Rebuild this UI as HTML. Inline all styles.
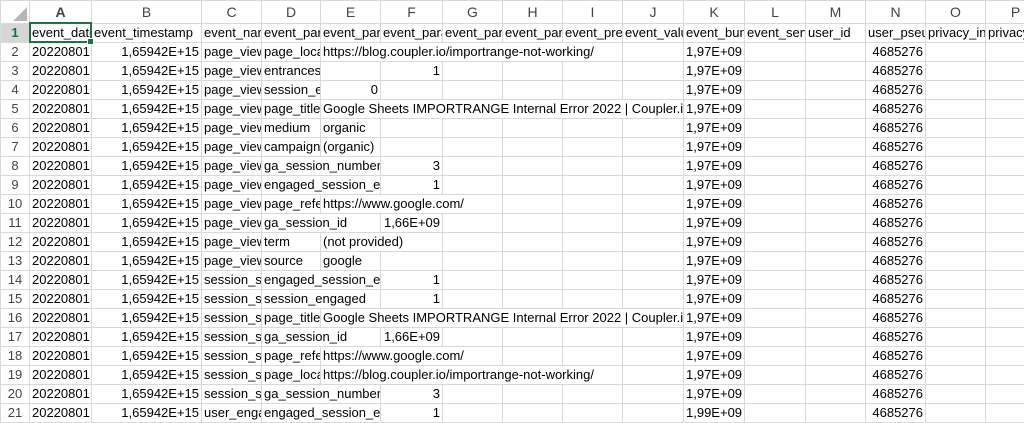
<!DOCTYPE html><html><head><style>
body{margin:0;width:1024px;height:422px;overflow:hidden;background:#fff;font-family:"Liberation Sans",sans-serif;font-size:13px;color:#000}
table{border-collapse:collapse;table-layout:fixed;position:absolute;left:0;top:0;width:1045px}
td{border:1px solid #d9d9d9;height:18px;padding:0 2px;white-space:nowrap;overflow:hidden;text-overflow:clip;line-height:18px;max-width:0}
tr.h td{height:21px;text-align:center;color:#444;font-size:14px;background:#fff;border-color:#d9d9d9}
td.r{text-align:right}
td.n{text-align:center;color:#444;background:#fff;padding:0}
td.sel{background:#d6d6d6;color:#1e6b3c;font-weight:bold}
tr.h td.sel{border-bottom:2px solid #217346}
.corner{position:relative}
.corner:after{content:"";position:absolute;right:2px;bottom:2px;border-left:14px solid transparent;border-bottom:14px solid #b7b7b7}
#act{position:absolute;left:29px;top:22px;width:59px;height:17px;border:2px solid #217346}
#act:after{content:"";position:absolute;right:-4px;bottom:-4px;width:5px;height:5px;background:#217346;border:1px solid #fff}
</style></head><body>
<table>
<colgroup><col style="width:29px"><col style="width:62px"><col style="width:110px"><col style="width:60px"><col style="width:59px"><col style="width:60px"><col style="width:62px"><col style="width:60px"><col style="width:60px"><col style="width:60px"><col style="width:61px"><col style="width:61px"><col style="width:61px"><col style="width:60px"><col style="width:60px"><col style="width:60px"><col style="width:60px"></colgroup>
<tr class="h"><td class="corner"></td><td class="sel">A</td><td>B</td><td>C</td><td>D</td><td>E</td><td>F</td><td>G</td><td>H</td><td>I</td><td>J</td><td>K</td><td>L</td><td>M</td><td>N</td><td>O</td><td>P</td></tr>
<tr><td class="n sel">1</td><td>event_date</td><td>event_timestamp</td><td>event_name</td><td>event_para</td><td>event_para</td><td>event_para</td><td>event_para</td><td>event_para</td><td>event_previous</td><td>event_value</td><td>event_bundle</td><td>event_server</td><td>user_id</td><td class="r">user_pseu</td><td>privacy_in</td><td>privacy_info</td></tr>
<tr><td class="n">2</td><td>20220801</td><td class="r">1,65942E+15</td><td>page_view</td><td>page_location</td><td colspan="5">https://blog.coupler.io/importrange-not-working/</td><td></td><td class="r">1,97E+09</td><td></td><td></td><td class="r">4685276</td><td></td><td></td></tr>
<tr><td class="n">3</td><td>20220801</td><td class="r">1,65942E+15</td><td>page_view</td><td>entrances</td><td></td><td class="r">1</td><td></td><td></td><td></td><td></td><td class="r">1,97E+09</td><td></td><td></td><td class="r">4685276</td><td></td><td></td></tr>
<tr><td class="n">4</td><td>20220801</td><td class="r">1,65942E+15</td><td>page_view</td><td>session_engaged</td><td class="r">0</td><td></td><td></td><td></td><td></td><td></td><td class="r">1,97E+09</td><td></td><td></td><td class="r">4685276</td><td></td><td></td></tr>
<tr><td class="n">5</td><td>20220801</td><td class="r">1,65942E+15</td><td>page_view</td><td>page_title</td><td colspan="6">Google Sheets IMPORTRANGE Internal Error 2022 | Coupler.io Blog</td><td class="r">1,97E+09</td><td></td><td></td><td class="r">4685276</td><td></td><td></td></tr>
<tr><td class="n">6</td><td>20220801</td><td class="r">1,65942E+15</td><td>page_view</td><td>medium</td><td>organic</td><td></td><td></td><td></td><td></td><td></td><td class="r">1,97E+09</td><td></td><td></td><td class="r">4685276</td><td></td><td></td></tr>
<tr><td class="n">7</td><td>20220801</td><td class="r">1,65942E+15</td><td>page_view</td><td>campaign</td><td>(organic)</td><td></td><td></td><td></td><td></td><td></td><td class="r">1,97E+09</td><td></td><td></td><td class="r">4685276</td><td></td><td></td></tr>
<tr><td class="n">8</td><td>20220801</td><td class="r">1,65942E+15</td><td>page_view</td><td colspan="2">ga_session_number</td><td class="r">3</td><td></td><td></td><td></td><td></td><td class="r">1,97E+09</td><td></td><td></td><td class="r">4685276</td><td></td><td></td></tr>
<tr><td class="n">9</td><td>20220801</td><td class="r">1,65942E+15</td><td>page_view</td><td colspan="2">engaged_session_event</td><td class="r">1</td><td></td><td></td><td></td><td></td><td class="r">1,97E+09</td><td></td><td></td><td class="r">4685276</td><td></td><td></td></tr>
<tr><td class="n">10</td><td>20220801</td><td class="r">1,65942E+15</td><td>page_view</td><td>page_referrer</td><td colspan="3">https://www.google.com/</td><td></td><td></td><td></td><td class="r">1,97E+09</td><td></td><td></td><td class="r">4685276</td><td></td><td></td></tr>
<tr><td class="n">11</td><td>20220801</td><td class="r">1,65942E+15</td><td>page_view</td><td colspan="2">ga_session_id</td><td class="r">1,66E+09</td><td></td><td></td><td></td><td></td><td class="r">1,97E+09</td><td></td><td></td><td class="r">4685276</td><td></td><td></td></tr>
<tr><td class="n">12</td><td>20220801</td><td class="r">1,65942E+15</td><td>page_view</td><td>term</td><td colspan="2">(not provided)</td><td></td><td></td><td></td><td></td><td class="r">1,97E+09</td><td></td><td></td><td class="r">4685276</td><td></td><td></td></tr>
<tr><td class="n">13</td><td>20220801</td><td class="r">1,65942E+15</td><td>page_view</td><td>source</td><td>google</td><td></td><td></td><td></td><td></td><td></td><td class="r">1,97E+09</td><td></td><td></td><td class="r">4685276</td><td></td><td></td></tr>
<tr><td class="n">14</td><td>20220801</td><td class="r">1,65942E+15</td><td>session_start</td><td colspan="2">engaged_session_event</td><td class="r">1</td><td></td><td></td><td></td><td></td><td class="r">1,97E+09</td><td></td><td></td><td class="r">4685276</td><td></td><td></td></tr>
<tr><td class="n">15</td><td>20220801</td><td class="r">1,65942E+15</td><td>session_start</td><td colspan="2">session_engaged</td><td class="r">1</td><td></td><td></td><td></td><td></td><td class="r">1,97E+09</td><td></td><td></td><td class="r">4685276</td><td></td><td></td></tr>
<tr><td class="n">16</td><td>20220801</td><td class="r">1,65942E+15</td><td>session_start</td><td>page_title</td><td colspan="6">Google Sheets IMPORTRANGE Internal Error 2022 | Coupler.io Blog</td><td class="r">1,97E+09</td><td></td><td></td><td class="r">4685276</td><td></td><td></td></tr>
<tr><td class="n">17</td><td>20220801</td><td class="r">1,65942E+15</td><td>session_start</td><td colspan="2">ga_session_id</td><td class="r">1,66E+09</td><td></td><td></td><td></td><td></td><td class="r">1,97E+09</td><td></td><td></td><td class="r">4685276</td><td></td><td></td></tr>
<tr><td class="n">18</td><td>20220801</td><td class="r">1,65942E+15</td><td>session_start</td><td>page_referrer</td><td colspan="3">https://www.google.com/</td><td></td><td></td><td></td><td class="r">1,97E+09</td><td></td><td></td><td class="r">4685276</td><td></td><td></td></tr>
<tr><td class="n">19</td><td>20220801</td><td class="r">1,65942E+15</td><td>session_start</td><td>page_location</td><td colspan="5">https://blog.coupler.io/importrange-not-working/</td><td></td><td class="r">1,97E+09</td><td></td><td></td><td class="r">4685276</td><td></td><td></td></tr>
<tr><td class="n">20</td><td>20220801</td><td class="r">1,65942E+15</td><td>session_start</td><td colspan="2">ga_session_number</td><td class="r">3</td><td></td><td></td><td></td><td></td><td class="r">1,97E+09</td><td></td><td></td><td class="r">4685276</td><td></td><td></td></tr>
<tr><td class="n">21</td><td>20220801</td><td class="r">1,65942E+15</td><td>user_engagement</td><td colspan="2">engaged_session_event</td><td class="r">1</td><td></td><td></td><td></td><td></td><td class="r">1,99E+09</td><td></td><td></td><td class="r">4685276</td><td></td><td></td></tr>
</table>
<div id="act"></div>
</body></html>
